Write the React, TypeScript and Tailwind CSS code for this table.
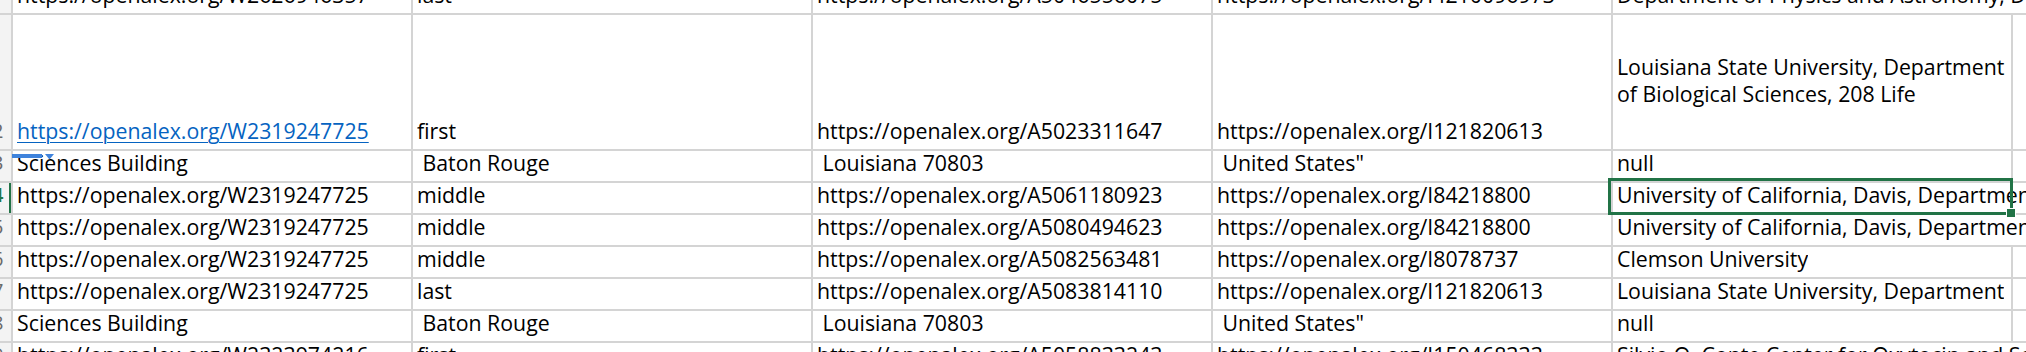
type Cell = {
  text: string;
  link?: boolean;
  overflow?: boolean;
};

type Row = {
  n: number;
  h: string;
  cells: Cell[];
};

const rows: Row[] = [
  {
    n: 11,
    h: "h-[32px]",
    cells: [
      { text: "https://openalex.org/W2626946357" },
      { text: "last" },
      { text: "https://openalex.org/A5046556075" },
      { text: "https://openalex.org/I4210096973" },
      { text: "Department of Physics and Astronomy, Department of Physics", overflow: true },
    ],
  },
  {
    n: 12,
    h: "h-[136px]",
    cells: [
      { text: "https://openalex.org/W2319247725", link: true },
      { text: "first" },
      { text: "https://openalex.org/A5023311647" },
      { text: "https://openalex.org/I121820613" },
      { text: "" },
    ],
  },
  {
    n: 13,
    h: "h-[32px]",
    cells: [
      { text: "Sciences Building" },
      { text: " Baton Rouge" },
      { text: " Louisiana 70803" },
      { text: ' United States"' },
      { text: "null" },
    ],
  },
  {
    n: 14,
    h: "h-[32px]",
    cells: [
      { text: "https://openalex.org/W2319247725" },
      { text: "middle" },
      { text: "https://openalex.org/A5061180923" },
      { text: "https://openalex.org/I84218800" },
      { text: "University of California, Davis, Department of Psychology", overflow: true },
    ],
  },
  {
    n: 15,
    h: "h-[32px]",
    cells: [
      { text: "https://openalex.org/W2319247725" },
      { text: "middle" },
      { text: "https://openalex.org/A5080494623" },
      { text: "https://openalex.org/I84218800" },
      { text: "University of California, Davis, Department of Psychology", overflow: true },
    ],
  },
  {
    n: 16,
    h: "h-[32px]",
    cells: [
      { text: "https://openalex.org/W2319247725" },
      { text: "middle" },
      { text: "https://openalex.org/A5082563481" },
      { text: "https://openalex.org/I8078737" },
      { text: "Clemson University" },
    ],
  },
  {
    n: 17,
    h: "h-[32px]",
    cells: [
      { text: "https://openalex.org/W2319247725" },
      { text: "last" },
      { text: "https://openalex.org/A5083814110" },
      { text: "https://openalex.org/I121820613" },
      { text: "Louisiana State University, Department" },
    ],
  },
  {
    n: 18,
    h: "h-[32px]",
    cells: [
      { text: "Sciences Building" },
      { text: " Baton Rouge" },
      { text: " Louisiana 70803" },
      { text: ' United States"' },
      { text: "null" },
    ],
  },
  {
    n: 19,
    h: "h-[32px]",
    cells: [
      { text: "https://openalex.org/W2323974216" },
      { text: "first" },
      { text: "https://openalex.org/A5058833243" },
      { text: "https://openalex.org/I150468333" },
      { text: "Silvio O. Conte Center for Oxytocin and Social Cognition", overflow: true },
    ],
  },
];

function SheetCell({ cell, row, col }: { cell: Cell; row: number; col: number }) {
  const selected = row === 14 && col === 4;
  const wrapped = row === 12 && col === 4;

  return (
    <div
      className={`relative flex w-[400px] shrink-0 items-end border-r-2 pl-[4px] ${
        cell.overflow ? "border-transparent" : "border-[#d4d4d4]"
      } ${wrapped ? "pb-[42px]" : "pb-[5px]"} ${selected ? "z-10" : ""}`}
    >
      {wrapped ? (
        <div className="flex flex-col leading-[27px]">
          <span>Louisiana State University, Department</span>
          <span>of Biological Sciences, 208 Life</span>
        </div>
      ) : (
        <span
          className={`whitespace-pre leading-[27px] ${
            cell.link ? "text-[#0563c1] underline decoration-1 underline-offset-[3px]" : ""
          } ${cell.overflow ? "" : "overflow-hidden"}`}
        >
          {cell.text}
        </span>
      )}

      {row === 13 && col === 0 && (
        <div className="absolute left-[-1px] top-[3px] flex items-start gap-[3px]">
          <div className="h-[4px] w-[30px] bg-[#3f83dc]" />
          <svg width="9" height="6" viewBox="0 0 9 6">
            <path d="M0 0 H9 L4.5 5.5 Z" fill="#3f83dc" />
          </svg>
        </div>
      )}

      {selected && (
        <>
          <div className="pointer-events-none absolute left-[-5px] top-[-5px] h-[37px] w-[405px] border-[3px] border-[#217346]" />
          <div className="absolute left-[393px] top-[25px] h-[10px] w-[10px] border border-white bg-[#217346]" />
        </>
      )}
    </div>
  );
}

export default function App() {
  return (
    <div
      className="h-[352px] w-[2026px] overflow-hidden bg-white text-[21.3px] text-black"
      style={{ fontFamily: '"Open Sans", "Noto Sans", sans-serif' }}
    >
      <div className="ml-[-27px] mt-[-17px] flex flex-col">
        {rows.map((row) => (
          <div key={row.n} className={`flex ${row.h} border-b-2 border-[#d4d4d4]`}>
            <div className="relative flex w-[40px] shrink-0 items-end justify-center overflow-hidden border-r-2 border-[#d4d4d4] bg-[#f3f3f3] pb-[5px]">
              <span
                className={`text-[20px] leading-[27px] ${
                  row.n === 14 ? "font-semibold text-[#217346]" : "text-[#6a6a6a]"
                }`}
              >
                {row.n}
              </span>
              {row.n === 14 && <div className="absolute right-0 top-0 h-full w-[2px] bg-[#217346]" />}
            </div>
            {row.cells.map((cell, i) => (
              <SheetCell key={i} cell={cell} row={row.n} col={i} />
            ))}
          </div>
        ))}
      </div>
    </div>
  );
}
